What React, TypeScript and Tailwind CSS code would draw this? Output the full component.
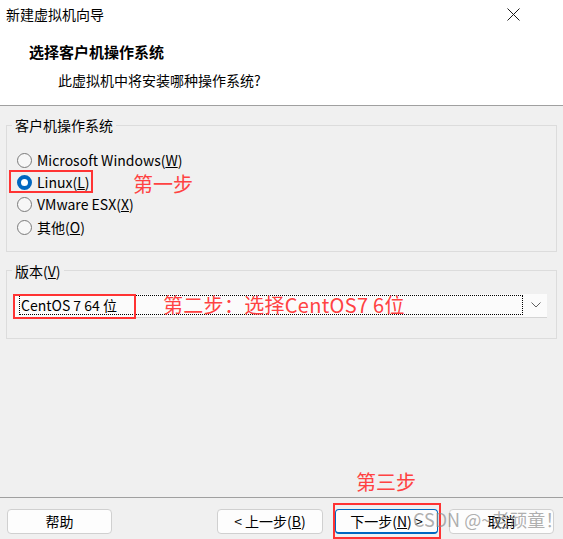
import React, { useState } from 'react';

const font = "font-['Noto_Sans_CJK_SC',sans-serif]";

type Option = { id: string; label: string; key: string; tail?: string };

const options: Option[] = [
    { id: 'win', label: 'Microsoft Windows(', key: 'W', tail: ')' },
    { id: 'linux', label: 'Linux(', key: 'L', tail: ')' },
    { id: 'esx', label: 'VMware ESX(', key: 'X', tail: ')' },
    { id: 'other', label: '其他(', key: 'O', tail: ')' },
];

const Radio: React.FC<{ checked: boolean }> = ({ checked }) =>
    checked ? (
        <span className="w-[15px] h-[15px] rounded-full border-[4px] border-[#0067c0] bg-white shrink-0" />
    ) : (
        <span className="w-[15px] h-[15px] rounded-full border border-[#7a7a7a] bg-[#f7f7f7] shrink-0" />
    );

const Button: React.FC<{ children: React.ReactNode; primary?: boolean; className?: string }> = ({ children, primary, className }) => (
    <button
        className={`h-[25px] rounded-[4px] bg-[#fdfdfd] text-[14px] text-black flex items-center justify-center whitespace-nowrap ${
            primary ? 'border border-[#0067c0] border-b-2' : 'border border-[#d0d0d0]'
        } ${className ?? 'w-[105px]'}`}
    >
        {children}
    </button>
);

const App: React.FC = () => {
    const [os, setOs] = useState('linux');

    return (
        <div className={`relative w-[563px] h-[539px] bg-[#f0f0f0] flex flex-col overflow-hidden text-black ${font}`}>
            {/* Header */}
            <div className="h-[106px] bg-white border-b border-[#a0a0a0] shrink-0">
                <div className="h-[28px] flex items-center justify-between pl-[6px] pr-[43px]">
                    <span className="text-[14px] leading-none">新建虚拟机向导</span>
                    <svg width="13" height="13" viewBox="0 0 13 13" className="text-[#1a1a1a]">
                        <path d="M0.5 0.5 L12.5 12.5 M12.5 0.5 L0.5 12.5" stroke="currentColor" strokeWidth="1" />
                    </svg>
                </div>
                <div className="pl-[29px] mt-[14px] h-[20px] flex items-center text-[15px] font-bold">选择客户机操作系统</div>
                <div className="pl-[58px] mt-[8px] h-[20px] flex items-center text-[14px]">此虚拟机中将安装哪种操作系统?</div>
            </div>

            {/* Guest OS group */}
            <fieldset className="mt-[10px] mx-[6px] border border-[#dcdcdc] p-0">
                <legend className="ml-[5px] px-[3px] text-[14px] leading-[18px]">客户机操作系统</legend>
                <div className="pl-[10px] pt-[15px] pb-[12px]">
                    {options.map(o => (
                        <label key={o.id} onClick={() => setOs(o.id)} className="h-[22.4px] flex items-center gap-[5px] text-[14px] cursor-default">
                            <Radio checked={os === o.id} />
                            <span>
                                {o.label}
                                <span className="underline">{o.key}</span>
                                {o.tail}
                            </span>
                        </label>
                    ))}
                </div>
            </fieldset>

            {/* Version group */}
            <fieldset className="mt-[10px] mx-[6px] border border-[#dcdcdc] p-0">
                <legend className="ml-[5px] px-[3px] text-[14px] leading-[18px]">
                    版本(<span className="underline">V</span>)
                </legend>
                <div className="pl-[8px] pr-[9px] pt-[14px] pb-[20px]">
                    <div className="h-[24px] bg-[#fbfbfb] border-b border-[#d4d4d4] flex items-center pl-[4px] pr-[1px]">
                        <div className="flex-1 h-[20px] border border-dotted border-black flex items-center pl-[1px] text-[14px]">
                            CentOS 7 64 位
                        </div>
                        <svg width="20" height="10" viewBox="0 0 20 10" className="ml-[3px]">
                            <path d="M5.5 2.5 L10 7 L14.5 2.5" fill="none" stroke="#606060" strokeWidth="1" />
                        </svg>
                    </div>
                </div>
            </fieldset>

            <div className="flex-1" />

            {/* Footer */}
            <div className="h-[42px] border-t border-[#a0a0a0] shrink-0 flex items-start pt-[11px] pl-[7px] pr-[9px]">
                <Button>帮助</Button>
                <div className="flex-1" />
                <Button className="w-[106px]">
                    &lt; 上一步(<span className="underline">B</span>)
                </Button>
                <Button primary className="w-[103px] ml-[12px]">
                    下一步(<span className="underline">N</span>) &gt;
                </Button>
                <Button className="w-[105px] ml-[11px]">取消</Button>
            </div>

            {/* Annotations laid over the screenshot */}
            <div className="absolute left-[9px] top-[170px] w-[84px] h-[23px] border-2 border-[#f33]" />
            <span className="absolute left-[133px] top-[171px] text-[20px] leading-[26px] text-[#ff4242] whitespace-nowrap">第一步</span>
            <div className="absolute left-[13px] top-[294px] w-[123px] h-[25px] border-2 border-[#f33]" />
            <span className="absolute left-[163px] top-[292px] text-[20px] leading-[26px] text-[#ff4242] whitespace-nowrap tracking-[0.3px]">
                第二步：选择CentOS7 6位
            </span>
            <span className="absolute left-[356px] top-[469px] text-[20px] leading-[26px] text-[#ff4242] whitespace-nowrap">第三步</span>
            <div className="absolute left-[333px] top-[503px] w-[108px] h-[36px] border-2 border-[#f33]" />
            <span className="absolute left-[413px] top-[507px] text-[18px] leading-[24px] text-[#8c8c8c]/70 whitespace-nowrap pointer-events-none">
                CSDN @~老顽童！
            </span>
        </div>
    );
};

export default App;
